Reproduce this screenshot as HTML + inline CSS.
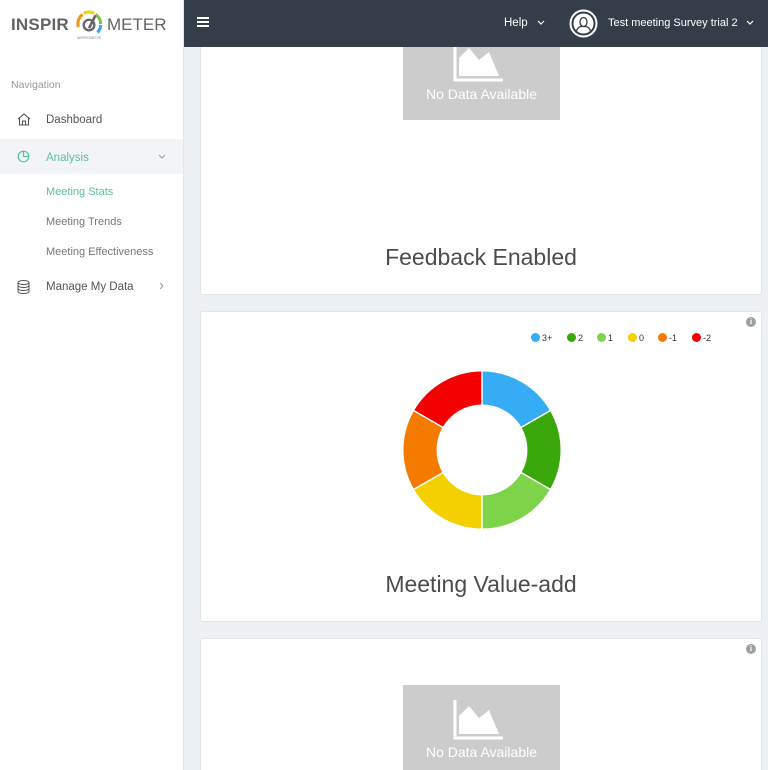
<!DOCTYPE html>
<html style="height:770px;overflow:hidden"><head><meta charset="utf-8"><style>
*{box-sizing:border-box;margin:0;padding:0}
body{width:768px;height:770px;overflow:hidden;font-family:"Liberation Sans",sans-serif;background:#eef1f4;position:relative}
.side{position:absolute;left:0;top:0;width:184px;height:770px;background:#fff;border-right:1px solid #e3e6ea}
.hdr{position:absolute;left:184px;top:0;width:584px;height:47px;background:#353e48;color:#fff;font-size:11.5px}
.card{position:absolute;left:200px;width:562px;background:#fff;border:1px solid #e2e5e9;border-radius:3px}
.nd{position:absolute;left:202px;width:157px;height:93px;background:#cccccc;color:#fff;font-size:14px;text-align:center}
.nd span{position:absolute;left:0;right:0;bottom:18px}
.title{position:absolute;left:0;right:0;text-align:center;font-size:23px;color:#4d4d4d}
.nav{position:absolute;font-size:11.5px;color:#555}
.info{position:absolute;right:5px;top:5px;width:10px;height:10px;border-radius:50%;background:#9aa0a6;color:#fff;font-size:8px;font-weight:bold;text-align:center;line-height:10px;font-family:"Liberation Serif",serif}
.lg{position:absolute;top:21px;font-size:9px;color:#333}
.lg i{display:inline-block;width:9px;height:9px;border-radius:50%;vertical-align:-1px;margin-right:2px}
.chev{position:absolute}
</style></head><body>
<div class="side">
 <div style="position:absolute;left:11px;top:15px;font-size:17px;font-weight:bold;color:#606368;letter-spacing:0.2px">INSPIR</div>
 <svg style="position:absolute;left:73px;top:7px" width="32" height="34" viewBox="0 0 30 32">
  <path d="M5 19 A11 11 0 0 1 9 7" stroke="#f39a1e" stroke-width="3" fill="none"/>
  <path d="M10 6 A11 11 0 0 1 20 6" stroke="#f2d020" stroke-width="3" fill="none"/>
  <path d="M21 7 A11 11 0 0 1 26 16" stroke="#7cc242" stroke-width="3" fill="none"/>
  <path d="M26 17 A11 11 0 0 1 23 24" stroke="#3aa4e0" stroke-width="3" fill="none"/>
  <circle cx="15" cy="17" r="5" stroke="#666" stroke-width="2.2" fill="none"/>
  <path d="M15 20 L21 8" stroke="#666" stroke-width="2.5"/>
  <text x="15" y="30" font-size="3" text-anchor="middle" fill="#888">INSPIROMETER</text>
 </svg>
 <div style="position:absolute;left:107px;top:15px;font-size:17px;color:#606368">METER</div>
 <div class="nav" style="left:11px;top:79px;font-size:10.5px;color:#999">Navigation</div>
 <svg style="position:absolute;left:17px;top:113px" width="14" height="13" viewBox="0 0 14 13"><path d="M1 6 L7 1 L13 6 M2.5 5 V12 H11.5 V5 M5.5 12 V8 H8.5 V12" stroke="#555" fill="none" stroke-width="1.1"/></svg>
 <div class="nav" style="left:46px;top:114px">Dashboard</div>
 <div style="position:absolute;left:0;top:139px;width:183px;height:35px;background:#f2f4f6"></div>
 <svg style="position:absolute;left:17px;top:150px" width="13" height="13" viewBox="0 0 13 13"><circle cx="6.5" cy="6.5" r="5.3" stroke="#5cbf9b" fill="none" stroke-width="1.2"/><path d="M6.5 1.2 V6.5 H11.8" stroke="#5cbf9b" fill="none" stroke-width="1.2"/></svg>
 <div class="nav" style="left:46px;top:152px;color:#5cbf9b">Analysis</div>
 <svg class="chev" style="left:158px;top:154px" width="8" height="5" viewBox="0 0 8 5"><path d="M1 1 L4 4 L7 1" stroke="#999" fill="none"/></svg>
 <div class="nav" style="left:46px;top:186px;color:#5cbf9b;font-size:11px">Meeting Stats</div>
 <div class="nav" style="left:46px;top:216px;color:#777;font-size:11px">Meeting Trends</div>
 <div class="nav" style="left:46px;top:246px;color:#777;font-size:11px">Meeting Effectiveness</div>
 <svg style="position:absolute;left:17px;top:280px" width="13" height="14" viewBox="0 0 13 14"><ellipse cx="6.5" cy="2.5" rx="5.5" ry="2" stroke="#555" fill="none"/><path d="M1 2.5 V11.5 A5.5 2 0 0 0 12 11.5 V2.5 M1 5.5 A5.5 2 0 0 0 12 5.5 M1 8.5 A5.5 2 0 0 0 12 8.5" stroke="#555" fill="none"/></svg>
 <div class="nav" style="left:46px;top:281px">Manage My Data</div>
 <svg class="chev" style="left:159px;top:282px" width="5" height="8" viewBox="0 0 5 8"><path d="M1 1 L4 4 L1 7" stroke="#999" fill="none"/></svg>
</div>
<div class="card" style="top:-10px;height:305px">
 <div class="nd" style="top:36px"><svg style="position:absolute;left:50px;top:15px" width="50" height="40" viewBox="0 0 50 40"><path d="M2 0 V38 H50" stroke="#fff" stroke-width="3" fill="none"/><path d="M6 34 V16 L16 6 L26 18 L36 10 L46 34 Z" fill="#fff"/></svg><span>No Data Available</span></div>
 <div class="title" style="top:253px">Feedback Enabled</div>
</div>
<div class="card" style="top:311px;height:311px">
 <div class="info">i</div>
 <div class="lg" style="left:330px"><i style="background:#36acf5"></i>3+</div>
 <div class="lg" style="left:366px"><i style="background:#3aa70a"></i>2</div>
 <div class="lg" style="left:396px"><i style="background:#7ed448"></i>1</div>
 <div class="lg" style="left:427px"><i style="background:#f5d000"></i>0</div>
 <div class="lg" style="left:457px"><i style="background:#f47a00"></i>-1</div>
 <div class="lg" style="left:491px"><i style="background:#f50000"></i>-2</div>
 <svg style="position:absolute;left:200px;top:57px" width="162" height="162" viewBox="-81 -81 162 162">
  <g stroke-width="33" fill="none">
   <path d="M0 -62 A62 62 0 0 1 53.69 -31" stroke="#36acf5"/>
   <path d="M53.69 -31 A62 62 0 0 1 53.69 31" stroke="#3aa70a"/>
   <path d="M53.69 31 A62 62 0 0 1 0 62" stroke="#7ed448"/>
   <path d="M0 62 A62 62 0 0 1 -53.69 31" stroke="#f5d000"/>
   <path d="M-53.69 31 A62 62 0 0 1 -53.69 -31" stroke="#f47a00"/>
   <path d="M-53.69 -31 A62 62 0 0 1 0 -62" stroke="#f50000"/>
  </g>
  <g stroke="#fff" stroke-width="1.5">
   <path d="M0 -45 V-80 M39 -22.5 L69.3 -40 M39 22.5 L69.3 40 M0 45 V80 M-39 22.5 L-69.3 40 M-39 -22.5 L-69.3 -40"/>
  </g>
 </svg>
 <div class="title" style="top:259px">Meeting Value-add</div>
</div>
<div class="card" style="top:638px;height:132px;border-bottom:none;border-radius:3px 3px 0 0">
 <div class="info">i</div>
 <div class="nd" style="top:46px"><svg style="position:absolute;left:50px;top:15px" width="50" height="40" viewBox="0 0 50 40"><path d="M2 0 V38 H50" stroke="#fff" stroke-width="3" fill="none"/><path d="M6 34 V16 L16 6 L26 18 L36 10 L46 34 Z" fill="#fff"/></svg><span>No Data Available</span></div>
</div>
<div class="hdr">
 <div style="position:absolute;left:13px;top:17px;width:12px;height:1.5px;background:#fff;box-shadow:0 4px 0 #fff,0 8px 0 #fff"></div>
 <div style="position:absolute;left:320px;top:17px">Help</div>
 <svg class="chev" style="left:353px;top:20px" width="8" height="5" viewBox="0 0 8 5"><path d="M1 1 L4 4 L7 1" stroke="#fff" fill="none" stroke-width="1.2"/></svg>
 <svg style="position:absolute;left:385px;top:9px" width="29" height="29" viewBox="0 0 29 29"><circle cx="14.5" cy="14.5" r="13" stroke="#fff" stroke-width="2" fill="none"/><circle cx="14.5" cy="14.5" r="10" fill="#fff"/><path d="M11 13 a3.5 4.5 0 1 1 7 0 a3.5 4.5 0 1 1 -7 0 M7.5 22 q1 -4 5 -4.5 h4 q4 .5 5 4.5" stroke="#353e48" stroke-width="1.3" fill="none"/></svg>
 <div style="position:absolute;left:424px;top:17px;font-size:11px">Test meeting Survey trial 2</div>
 <svg class="chev" style="left:562px;top:20px" width="8" height="5" viewBox="0 0 8 5"><path d="M1 1 L4 4 L7 1" stroke="#fff" fill="none" stroke-width="1.2"/></svg>
</div>
</body></html>
